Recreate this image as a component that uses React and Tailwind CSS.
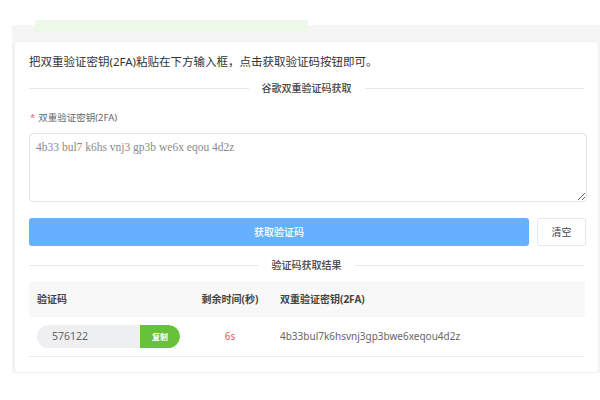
import React from "react";

const cjk = { fontFamily: '"Noto Sans", "Noto Sans CJK SC", sans-serif' };

function Divider({ title }) {
  return (
    <div className="flex h-[12px] items-center gap-[13px]">
      <div className="h-px flex-1 bg-[#e8e8e8]"></div>
      <span className="text-[10px] leading-[12px] font-medium text-[#444]">{title}</span>
      <div className="h-px flex-1 bg-[#e8e8e8]"></div>
    </div>
  );
}

export default function App() {
  const secret = "4b33 bul7 k6hs vnj3 gp3b we6x eqou 4d2z";
  return (
    <div className="h-[400px] w-[600px] overflow-hidden bg-white" style={cjk}>
      <div className="ml-[12px] mt-[25px] flex h-[348px] flex-col bg-[#f5f5f5]">
        {/* alert strip peeking out above the card */}
        <div className="-mt-[5px] ml-[23px] h-[12px] w-[273px] bg-[#eef8e8]"></div>

        <div className="ml-[3px] mr-[2px] mt-[10px] flex h-[330px] flex-col rounded-[4px] bg-white px-[14px] pt-[12px] shadow-[0_0_3px_rgba(0,0,0,0.06)]">
          <p className="h-[16px] text-[11.5px] leading-[16px] text-[#333]">
            把双重验证密钥(2FA)粘贴在下方输入框，点击获取验证码按钮即可。
          </p>

          <div className="mt-[12px]">
            <Divider title="谷歌双重验证码获取" />
          </div>

          <div className="mt-[17px] flex h-[14px] items-center text-[9.5px] leading-[14px] text-[#666]">
            <span className="mr-[3px] ml-[1px] text-[#f56c6c]">*</span>
            <span>双重验证密钥(2FA)</span>
          </div>

          <textarea
            readOnly
            value={secret}
            className="mt-[8px] h-[69px] w-[558px] rounded-[4px] border border-[#e2e4e8] px-[6px] pt-[4px] text-[11.5px] leading-[18px] text-[#8a8a8a] outline-none"
            style={{ fontFamily: '"Liberation Serif", serif' }}
          />

          <div className="mt-[16px] flex h-[28px] w-[558px] gap-[8px] pr-[1px]">
            <button className="flex flex-1 items-center justify-center rounded-[3px] bg-[#66b1ff] text-[10px] font-medium text-white">
              获取验证码
            </button>
            <button className="flex w-[49px] items-center justify-center rounded-[3px] border border-[#e4e6ea] bg-white text-[10px] text-[#444]">
              清空
            </button>
          </div>

          <div className="mt-[13px]">
            <Divider title="验证码获取结果" />
          </div>

          <div className="mt-[11px] w-[556px]">
            <div className="flex h-[35px] items-center bg-[#f8f8f8] text-[10px] font-bold text-[#444]">
              <div className="w-[161px] pl-[8px]">验证码</div>
              <div className="w-[80px] text-center">剩余时间(秒)</div>
              <div className="flex-1 pl-[10px]">双重验证密钥(2FA)</div>
            </div>
            <div className="flex h-[40px] items-center border-b border-[#ececec]">
              <div className="w-[161px] pl-[8px]">
                <div className="flex h-[23px] w-[143px] overflow-hidden rounded-full">
                  <div className="flex flex-1 items-center bg-[#eeeff1] pl-[15px] text-[10.5px] text-[#666]">
                    576122
                  </div>
                  <div className="flex w-[40px] items-center justify-center rounded-r-full bg-[#67c23a] text-[8px] font-bold text-white">
                    复制
                  </div>
                </div>
              </div>
              <div className="w-[80px] text-center text-[10px] font-medium text-[#f56c6c]">6s</div>
              <div className="flex-1 pl-[10px] text-[10px] text-[#666]">
                4b33bul7k6hsvnj3gp3bwe6xeqou4d2z
              </div>
            </div>
          </div>
        </div>
      </div>
    </div>
  );
}
